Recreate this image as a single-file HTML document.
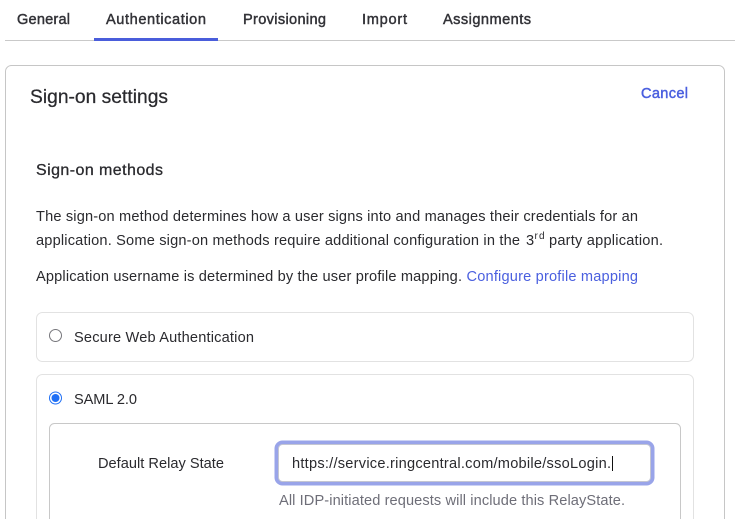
<!DOCTYPE html>
<html><head><meta charset="utf-8"><style>
html,body{margin:0;padding:0;background:#fff;width:735px;height:519px;overflow:hidden}
svg{display:block;font-family:"Liberation Sans",sans-serif}
text{fill:#2a2a2e;font-size:14.6px}
.t{fill:#333338;stroke:#333338;stroke-width:.45px}
.l{fill:#4a5fdf}
.h{fill:#6e6e78}
</style></head><body>
<svg width="735" height="519" viewBox="0 0 735 519" xmlns="http://www.w3.org/2000/svg">
<rect x="5" y="40" width="730" height="1" fill="#c9c9c9"/>
<rect x="94" y="38" width="124" height="3" fill="#4a5ddb"/>
<text class="t" x="17" y="24" textLength="53" lengthAdjust="spacing">General</text>
<text class="t" x="106" y="24" textLength="100" lengthAdjust="spacing">Authentication</text>
<text class="t" x="243" y="24" textLength="83" lengthAdjust="spacing">Provisioning</text>
<text class="t" x="362" y="24" textLength="45" lengthAdjust="spacing">Import</text>
<text class="t" x="443" y="24" textLength="88" lengthAdjust="spacing">Assignments</text>

<path d="M5.5 519V71.5a6 6 0 0 1 6-6H718.5a6 6 0 0 1 6 6V519" fill="#fff" stroke="#c6c6c6"/>
<text x="30" y="103" style="font-size:19.2px;stroke:#2a2a2e;stroke-width:.25px" textLength="138" lengthAdjust="spacing">Sign-on settings</text>
<text class="l" x="641" y="98" style="font-size:14.6px;stroke:#4a5fdf;stroke-width:.45px" textLength="47" lengthAdjust="spacing">Cancel</text>
<text x="36" y="175" style="font-size:16px;stroke:#2a2a2e;stroke-width:.3px" textLength="127" lengthAdjust="spacing">Sign-on methods</text>

<text x="36" y="221" textLength="602" lengthAdjust="spacing">The sign-on method determines how a user signs into and manages their credentials for an</text>
<text x="36" y="245" textLength="484" lengthAdjust="spacing">application. Some sign-on methods require additional configuration in the</text>
<text x="526" y="245" textLength="8" lengthAdjust="spacing">3</text>
<text x="534.5" y="239" style="font-size:10px" textLength="10" lengthAdjust="spacing">rd</text>
<text x="549" y="245" textLength="114" lengthAdjust="spacing">party application.</text>
<text x="36" y="281" textLength="426" lengthAdjust="spacing">Application username is determined by the user profile mapping.</text>
<text class="l" x="466.5" y="281" textLength="171.5" lengthAdjust="spacing">Configure profile mapping</text>

<rect x="36.5" y="312.5" width="657" height="49" rx="6" fill="#fff" stroke="#e2e2e2"/>
<circle cx="55.5" cy="335.5" r="6" fill="#fff" stroke="#77777c" stroke-width="1"/>
<text x="74" y="342" textLength="180" lengthAdjust="spacing">Secure Web Authentication</text>

<path d="M36.5 519V380.5a6 6 0 0 1 6-6H687.5a6 6 0 0 1 6 6V519" fill="#fff" stroke="#e2e2e2"/>
<circle cx="55.5" cy="398" r="6" fill="#fff" stroke="#1f6ff5" stroke-width="1"/>
<circle cx="55.5" cy="398" r="4" fill="#1f6ff5"/>
<text x="74" y="404" textLength="63" lengthAdjust="spacing">SAML 2.0</text>

<path d="M49.5 519V428.5a5 5 0 0 1 5-5H675.5a5 5 0 0 1 5 5V519" fill="#fff" stroke="#c8c8c8"/>
<text x="98" y="468" textLength="126" lengthAdjust="spacing">Default Relay State</text>
<rect x="276.5" y="442.5" width="376" height="41" rx="6" fill="#fff" stroke="#99a4e9" stroke-width="4"/>
<rect x="278.5" y="444.5" width="372" height="37" rx="4" fill="none" stroke="#c4c6d2" stroke-width="1"/>
<text x="292" y="468" textLength="319" lengthAdjust="spacing">https://service.ringcentral.com/mobile/ssoLogin.</text>
<rect x="612" y="456" width="1" height="15" fill="#111"/>
<text class="h" x="279" y="505" textLength="346" lengthAdjust="spacing">All IDP-initiated requests will include this RelayState.</text>
</svg>
</body></html>
